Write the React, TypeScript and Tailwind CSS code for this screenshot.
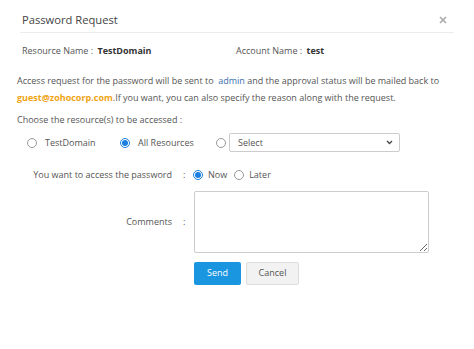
import React from "react";

function Radio({ checked }: { checked?: boolean }) {
  return (
    <span
      className={`inline-flex h-[10px] w-[10px] shrink-0 items-center justify-center rounded-full border ${
        checked ? "border-[#1a7fe0]" : "border-[#999]"
      } bg-white`}
    >
      {checked && <span className="h-[6px] w-[6px] rounded-full bg-[#1a7fe0]" />}
    </span>
  );
}

export default function App() {
  return (
    <div
      className="relative h-[349px] w-[474px] bg-white text-[9px] text-[#555]"
      style={{ fontFamily: "'Open Sans', sans-serif" }}
    >
      <div className="mx-[20px] flex h-[33px] items-center justify-between border-b border-[#ececec] pl-[2px] pt-[8px]">
        <span className="text-[11.2px] text-[#444]">Password Request</span>
        <svg width="8" height="8" viewBox="0 0 8 8" className="mr-[7px]">
          <path d="M1 1l6 6M7 1L1 7" stroke="#aaa" strokeWidth="1.6" />
        </svg>
      </div>
      <div className="flex h-[35px] items-center pl-[22px]">
        <div className="w-[214px]">
          Resource Name : <span className="ml-[2px] font-bold text-[#333]">TestDomain</span>
        </div>
        <div>
          Account Name : <span className="ml-[2px] font-bold text-[#333]">test</span>
        </div>
      </div>
      <div className="mt-[4px] pl-[17px] pr-[20px] leading-[17px]">
        Access request for the password will be sent to &nbsp;<span className="text-[#3a6fb0]">admin</span> and the approval
        status will be mailed back to
        <br />
        <span className="font-bold text-[#f0a416]">guest@zohocorp.com</span>.If you want, you can also specify the reason along with the request.
      </div>
      <div className="mt-[7px] pl-[17px] leading-[13px]">Choose the resource(s) to be accessed :</div>
      <div className="mt-[7px] flex items-center pl-[27px]">
        <Radio />
        <span className="ml-[8px] w-[75px]">TestDomain</span>
        <Radio checked />
        <span className="ml-[8px] w-[78px]">All Resources</span>
        <Radio />
        <div className="ml-[3px] flex h-[19px] w-[171px] items-center justify-between rounded-[2px] border border-[#ccc] pl-[8px] pr-[6px]">
          <span>Select</span>
          <svg width="7" height="5" viewBox="0 0 7 5">
            <path d="M1 1l2.5 2.5L6 1" fill="none" stroke="#444" strokeWidth="1.3" />
          </svg>
        </div>
      </div>
      <div className="mt-[16px] flex items-center">
        <span className="w-[172px] text-right">You want to access the password</span>
        <span className="ml-[11px] w-[10px]">:</span>
        <Radio checked />
        <span className="ml-[5px] mr-[7px]">Now</span>
        <Radio />
        <span className="ml-[5px]">Later</span>
      </div>
      <div className="mt-[9px] flex items-center">
        <span className="w-[172px] text-right">Comments</span>
        <span className="ml-[11px] w-[11px]">:</span>
        <textarea className="h-[62px] w-[235px] resize rounded-[2px] border border-[#ccc]" />
      </div>
      <div className="mt-[9px] flex pl-[194px]">
        <button className="h-[23px] w-[47px] rounded-[2px] bg-[#1a95e0] text-white">Send</button>
        <button className="ml-[5px] h-[23px] w-[53px] rounded-[2px] border border-[#ddd] bg-[#f2f2f2] text-[#555]">
          Cancel
        </button>
      </div>
    </div>
  );
}
